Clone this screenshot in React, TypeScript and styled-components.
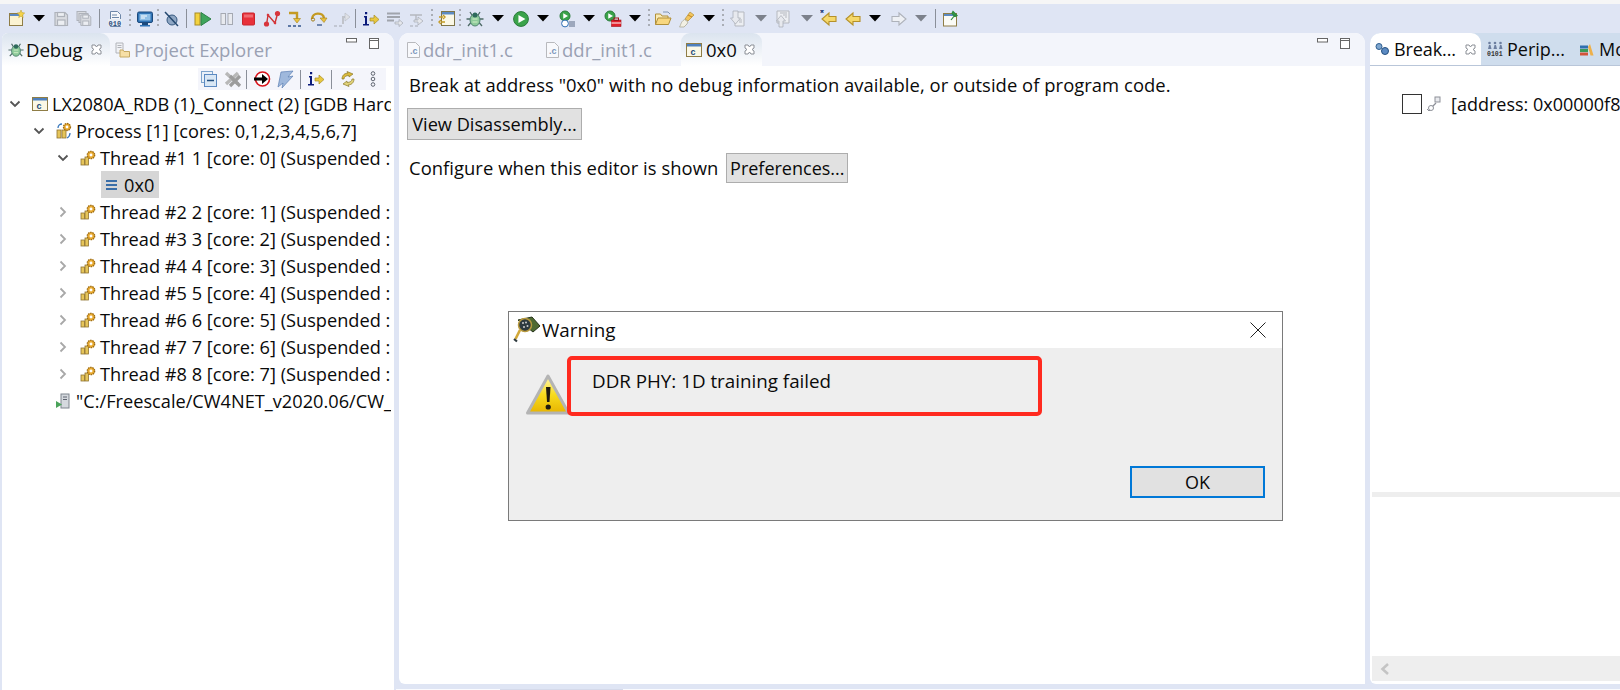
import React from "react";
import styled, { createGlobalStyle } from "styled-components";

const Global = createGlobalStyle`
  html, body { margin: 0; padding: 0; width: 1620px; height: 690px; overflow: hidden; background: #dfe5f4; }
  * { box-sizing: border-box; }
  body { font-family: "Open Sans", "Noto Sans", sans-serif; color: #0a0a0a; }
`;

const Page = styled.div`
  position: relative;
  width: 1620px;
  height: 690px;
  display: flex;
  flex-direction: column;
  background: #dfe5f4;
  overflow: hidden;
`;
const TopStrip = styled.div`
  height: 4px;
  background: #f6f6f6;
  flex: none;
`;
const Toolbar = styled.div`
  height: 29px;
  flex: none;
  display: flex;
  align-items: center;
  background: #dfe5f4;
`;
const Slot = styled.div<{ $ml: number }>`
  width: 12px;
  height: 22px;
  flex: none;
  margin-left: ${(p) => p.$ml}px;
  display: flex;
  align-items: center;
  justify-content: center;
  & > svg { flex: none; }
`;
const Sep = styled.div`
  width: 1px;
  height: 19px;
  flex: none;
  background: #8a8f99;
`;
const Dots = styled.div`
  width: 2px;
  height: 20px;
  flex: none;
  background: repeating-linear-gradient(to bottom, #a9adb5 0 2px, transparent 2px 5px);
`;
const Main = styled.div`
  flex: 1;
  min-height: 0;
  display: flex;
  padding-left: 2px;
`;
const LeftPanel = styled.section`
  width: 392px;
  flex: none;
  background: #fff;
  border-top-right-radius: 10px;
  border-top-left-radius: 6px;
  overflow: hidden;
  display: flex;
  flex-direction: column;
`;
const RightStack = styled.div`
  flex: 1;
  min-width: 0;
  display: flex;
  flex-direction: column;
`;
const Columns = styled.div`
  height: 651px;
  flex: none;
  display: flex;
  padding-left: 5px;
`;
const BottomBar = styled.div`
  height: 5px;
  flex: none;
`;
const MiniTabs = styled.div`
  height: 2px;
  flex: none;
  background: #fafbfe;
  margin-left: 2px;
  padding-left: 104px;
`;
const MiniTab = styled.div`
  width: 123px;
  height: 2px;
  background: #d5daea;
`;
const CenterPanel = styled.section`
  width: 966px;
  flex: none;
  background: #fff;
  border-radius: 10px 10px 0 6px;
  overflow: hidden;
  display: flex;
  flex-direction: column;
`;
const RightPanel = styled.section`
  flex: 1;
  margin-left: 5px;
  min-width: 0;
  background: #fff;
  border-top-left-radius: 10px;
  border-bottom-left-radius: 6px;
  overflow: hidden;
  display: flex;
  flex-direction: column;
`;
const TabBar = styled.div`
  height: 33px;
  flex: none;
  display: flex;
  align-items: stretch;
  background: #f3f5fb;
  position: relative;
`;
const RightTabBar = styled(TabBar)`
  background: #cfdded;
  border-bottom: 1px solid #b9c6d9;
`;
const Tab = styled.div<{ $w: number; $pl: number; $active?: boolean }>`
  width: ${(p) => p.$w}px;
  padding-left: ${(p) => p.$pl}px;
  flex: none;
  display: flex;
  align-items: center;
  font-size: 18.5px;
  white-space: nowrap;
  color: ${(p) => (p.$active ? "#0a0a0a" : "#9aa1b3")};
  & > svg { flex: none; }
  ${(p) =>
    p.$active
      ? "background: linear-gradient(to bottom, #dbe4ef, #ffffff); border-radius: 0 10px 0 0;"
      : ""}
`;
const CenterActive = styled(Tab)`
  border-radius: 9px 9px 0 0;
`;
const RightTabActive = styled(Tab)`
  background: #fff;
  border-radius: 10px 10px 0 0;
  font-size: 18px;
  letter-spacing: -0.1px;
`;
const RightTab = styled(Tab)`
  color: #0a0a0a;
  font-size: 18px;
  overflow: hidden;
`;
const TabLabel = styled.span<{ $gap: number }>`
  margin-left: ${(p) => p.$gap}px;
`;
const CloseMark = styled.span<{ $gap: number }>`
  margin-left: ${(p) => p.$gap}px;
  display: flex;
`;
const Spacer = styled.div`
  flex: 1;
`;
const WinButtons = styled.div`
  display: flex;
  align-items: flex-start;
  gap: 11px;
  padding: 5px 13px 0 0;
`;
const ViewBarRow = styled.div`
  height: 24px;
  flex: none;
  display: flex;
  justify-content: flex-end;
  align-items: flex-end;
  padding-right: 8px;
`;
const ViewBar = styled.div`
  width: 188px;
  height: 22px;
  background: #f4f5fb;
  display: flex;
  align-items: center;
`;
const Tree = styled.div`
  display: flex;
  flex-direction: column;
  overflow: hidden;
  width: 389px;
`;
const Row = styled.div<{ $d: number }>`
  height: 27px;
  flex: none;
  display: flex;
  align-items: center;
  padding-left: ${(p) => 4 + p.$d * 24}px;
  font-size: 18.2px;
  white-space: nowrap;
`;
const Chevron = styled.span`
  width: 18px;
  flex: none;
  display: flex;
  justify-content: center;
`;
const RowIcon = styled.span`
  width: 16px;
  margin-left: 8px;
  margin-right: 4px;
  flex: none;
  display: flex;
`;
const SelectedRow = styled.div`
  height: 27px;
  flex: none;
  display: flex;
  padding-left: 99px;
`;
const Selected = styled.div`
  width: 58px;
  display: flex;
  align-items: center;
  background: #d6d6d6;
  padding-left: 4px;
  gap: 6px;
  font-size: 18.2px;
`;
const EditorBody = styled.div`
  padding: 4px 8px 0 10px;
  display: flex;
  flex-direction: column;
  align-items: flex-start;
`;
const EditorLine = styled.div`
  font-size: 18.4px;
  line-height: 30px;
  white-space: nowrap;
  letter-spacing: 0.05px;
`;
const Btn = styled.button`
  height: 32px;
  padding: 0;
  border: 1px solid #adadad;
  background: #e1e1e1;
  font: inherit;
  font-size: 18.2px;
  color: #0a0a0a;
  display: block;
`;
const ViewDisasm = styled(Btn)`
  width: 175px;
  margin: 8px 0 0 -2px;
`;
const ConfigRow = styled.div`
  margin-top: 13px;
  display: flex;
  align-items: center;
  gap: 8px;
`;
const PrefBtn = styled(Btn)`
  width: 122px;
  height: 30px;
  font-size: 18px;
`;
const BreakRow = styled.div`
  display: flex;
  align-items: center;
  padding: 18px 0 0 32px;
  font-size: 18px;
  white-space: nowrap;
  height: 58px;
`;
const Check = styled.span`
  width: 20px;
  height: 20px;
  flex: none;
  border: 1px solid #333;
  background: #fff;
`;
const BreakIcon = styled.span`
  margin: 0 9px 0 4px;
  display: flex;
`;
const UpperPane = styled.div`
  height: 426px;
  flex: none;
`;
const Divider = styled.div`
  height: 5px;
  flex: none;
  margin-left: 2px;
  background: #eeeeee;
`;
const LowerPane = styled.div`
  flex: 1;
`;
const HScroll = styled.div`
  height: 25px;
  flex: none;
  margin: 0 0 3px 2px;
  background: #eeeeee;
  padding-left: 8px;
  display: flex;
  align-items: center;
`;
const Dialog = styled.div`
  position: absolute;
  left: 508px;
  top: 311px;
  width: 775px;
  height: 210px;
  border: 1px solid #7a7a7a;
  background: #eeeeee;
  display: flex;
  flex-direction: column;
  box-sizing: border-box;
`;
const DialogTitle = styled.div`
  height: 36px;
  flex: none;
  background: #fff;
  display: flex;
  align-items: center;
  padding: 0 16px 0 3px;
  font-size: 18.8px;
  gap: 0;
`;
const DialogBody = styled.div`
  flex: 1;
  display: flex;
  flex-direction: column;
  position: relative;
`;
const Message = styled.div`
  display: flex;
  padding: 0 0 0 16px;
  align-items: flex-start;
  height: 118px;
`;
const WarnIcon = styled.span`
  margin-top: 25px;
  display: flex;
`;
const MsgText = styled.div`
  margin: 21px 0 0 21px;
  font-size: 18.8px;
  line-height: 24px;
`;
const Actions = styled.div`
  display: flex;
  justify-content: flex-end;
  padding-right: 17px;
`;
const OkBtn = styled.button`
  width: 135px;
  height: 32px;
  border: 2px solid #0078d7;
  background: #e1e1e1;
  font: inherit;
  font-size: 18px;
  color: #0a0a0a;
  padding: 0;
`;
const RedBox = styled.div`
  position: absolute;
  left: 58px;
  top: 8px;
  width: 475px;
  height: 60px;
  border: 4px solid #ff2a1f;
  border-radius: 5px;
`;

const S = ({ s = 18, children }: { s?: number; children: React.ReactNode }) => (
  <svg width={s} height={s} viewBox="0 0 18 18">{children}</svg>
);
const Drop = ({ c = "#000" }: { c?: string }) => (
  <svg width="12" height="7" viewBox="0 0 12 7"><polygon points="0,0 12,0 6,6.5" fill={c} /></svg>
);
const Gd = () => <Drop c="#7c818b" />;
const NewIco = () => (
  <S><rect x="1.5" y="3.5" width="13" height="12" fill="#fbf3d2" stroke="#8f7d46" /><rect x="2" y="4" width="12" height="2" fill="#5c8ac2" /><path d="M13 0l1 2.6 2.7.4-2 1.9.5 2.7-2.2-1.4-2.3 1.4.6-2.7-2-1.9 2.7-.4z" fill="#f5d34a" stroke="#b99b2a" strokeWidth=".5" /></S>
);
const Floppy = ({ x = 2 }: { x?: number }) => (
  <g fill="none" stroke="#aeb2ba" strokeWidth="1.2"><path d={`M${x} 2.5h10l2.5 2.5v10.5h-12.5z`} fill="#d9dbe0" /><rect x={x + 2.5} y="2.5" width="7" height="4" fill="#eceef2" /><rect x={x + 2.5} y="10" width="7.5" height="5.5" fill="#eceef2" /></g>
);
const SaveIco = () => <S><Floppy /></S>;
const SaveAllIco = () => (
  <S><rect x="1" y="1.5" width="9" height="9" fill="#d9dbe0" stroke="#aeb2ba" /><rect x="3" y="3.5" width="9" height="9" fill="#d9dbe0" stroke="#aeb2ba" /><g transform="translate(4 3) scale(.8)"><Floppy x={1} /></g></S>
);
const BinIco = () => (
  <S><path d="M3.5 1.5h7l3 3v12h-10z" fill="#f6f8fb" stroke="#6d87a8" /><path d="M5 5h5M5 7.5h7" stroke="#6d87a8" /><rect x="1" y="9" width="14" height="7" fill="#e7edf5" /><text x="1.5" y="15.5" fontFamily="Liberation Mono, monospace" fontSize="7" fontWeight="700" fill="#2d4f7d">010</text></S>
);
const MonitorIco = () => (
  <S><rect x="1.5" y="2" width="15" height="10.5" rx="1.5" fill="#2f73b5" stroke="#1c4a7c" /><rect x="3.5" y="4" width="11" height="6.5" fill="#8fbfe6" /><path d="M5 6h6M5 8h4" stroke="#fff" /><rect x="6" y="13" width="6" height="2" fill="#1c4a7c" /><rect x="4" y="15" width="10" height="1.5" fill="#2f73b5" /></S>
);
const NoBpIco = () => (
  <S><circle cx="9" cy="10" r="5" fill="#8fa7c4" stroke="#35587f" /><path d="M2 2l13 14" stroke="#24486f" strokeWidth="1.5" /></S>
);
const ResumeIco = () => (
  <S><rect x="1" y="3" width="5" height="12" fill="#f3d23f" stroke="#a88c24" /><polygon points="7,2.5 17,9 7,15.5" fill="#3fa55b" stroke="#2f8147" /></S>
);
const SuspendIco = () => (
  <S><rect x="3" y="3.5" width="4.5" height="11" fill="#e8eaef" stroke="#a5a9b2" /><rect x="10" y="3.5" width="4.5" height="11" fill="#e8eaef" stroke="#a5a9b2" /></S>
);
const StopIco = () => (
  <S><rect x="2.5" y="3" width="12" height="12" rx="1" fill="#e8303a" stroke="#c9252c" /><rect x="4" y="4.5" width="9" height="3" fill="#f06a70" /></S>
);
const DiscoIco = () => (
  <S><path d="M3.5 15L5 5l7 8 3-11" fill="none" stroke="#c33" strokeWidth="1.4" /><circle cx="3.5" cy="14" r="2.6" fill="#d8343b" /><circle cx="14.5" cy="3.5" r="2.6" fill="#d8343b" /><circle cx="5" cy="5" r="1.3" fill="#d8343b" /><circle cx="12" cy="13" r="1.3" fill="#d8343b" /></S>
);
const StepIntoIco = () => (
  <S><path d="M2 3h8v6" fill="none" stroke="#c49a22" strokeWidth="2.4" /><polygon points="6.5,8.5 13.5,8.5 10,13" fill="#e9c23d" stroke="#a57f18" strokeWidth=".6" /><path d="M1 16h3M6 16h3M11 16h3" stroke="#33548a" strokeWidth="1.3" /></S>
);
const StepOverIco = () => (
  <S><path d="M2 9c0-7 11-7 12-1" fill="none" stroke="#c49a22" strokeWidth="2.4" /><polygon points="10,8 17,8 14,12.5" fill="#e9c23d" stroke="#a57f18" strokeWidth=".6" /><circle cx="3" cy="9.5" r="1.6" fill="none" stroke="#a57f18" /><path d="M7 15h5" stroke="#33548a" strokeWidth="1.3" /></S>
);
const StepRetIco = () => (
  <S><path d="M10 14V7h5" fill="none" stroke="#c0c3ca" strokeWidth="2" /><polygon points="9,7 14,3 14,11" fill="#dfe1e6" stroke="#b5b8bf" strokeWidth=".6" transform="rotate(180 13 7)" /><path d="M1 16h3M6 16h3" stroke="#a5a9b2" strokeWidth="1.2" /></S>
);
const IArrowIco = () => (
  <S><path d="M2 6h3v8h2v1.5H1V14h2V7.5H2zM3 2h2.2v2.2H3z" fill="#0a1a7a" /><path d="M8 8h4V5l5 4.5-5 4.5v-3H8z" fill="#e8c840" stroke="#a88c24" strokeWidth=".7" /></S>
);
const ListArrowIco = () => (
  <S><path d="M1 3.5h13M1 7h13M1 10.5h7" stroke="#a0a4ac" strokeWidth="1.8" /><path d="M9 12h4v-2.5l4 3.5-4 3.5V14H9z" fill="#e5e7ec" stroke="#a5a9b2" strokeWidth=".7" /></S>
);
const StepGreyIco = () => (
  <S><path d="M1 5h12M7 5v5" stroke="#b5b8bf" strokeWidth="1.4" /><path d="M5 10h4v-3l5 4-5 4v-3H5z" fill="#e5e7ec" stroke="#a5a9b2" strokeWidth=".7" /><path d="M1 16h3M6 16h3" stroke="#a5a9b2" /></S>
);
const WinArrowIco = () => (
  <S><rect x="3.5" y="1.5" width="13" height="14" fill="#fbf8e6" stroke="#7f7547" /><rect x="4" y="2" width="12" height="2.5" fill="#5c8ac2" /><path d="M1 7h4M5 5l2 2-2 2M7 12H3M3 10l-2 2 2 2" fill="none" stroke="#c49a22" strokeWidth="1.4" /></S>
);
const BugIco = ({ s = 18 }: { s?: number }) => (
  <S s={s}><path d="M4 2l2.500 4M14 2l-2.500 4M.5 9h4M13.500 9h4M2 16l3-3.500M16 16l-3-3.500" stroke="#4d6a66" strokeWidth="1.300" /><ellipse cx="9" cy="10" rx="5" ry="6" fill="#8ecb9a" stroke="#4f8270" /><circle cx="9" cy="5" r="2.500" fill="#2f6a5c" /><path d="M6.500 9h5M6.500 12h5" stroke="#d3efc8" /></S>
);
const RunBall = ({ r = 7, cx = 9, cy = 9 }: { r?: number; cx?: number; cy?: number }) => (
  <>
    <circle cx={cx} cy={cy} r={r} fill="#3aa34a" stroke="#2a7b3a" />
    <polygon points={`${cx - r * 0.35},${cy - r * 0.55} ${cx + r * 0.6},${cy} ${cx - r * 0.35},${cy + r * 0.55}`} fill="#fff" />
  </>
);
const RunIco = () => <S><RunBall r={7.4} /></S>;
const CovIco = () => (
  <S><RunBall r={5} cx={7} cy={6} /><circle cx="7" cy="13.5" r="3.4" fill="#fff" stroke="#2e6fb4" /><path d="M11 12h6M11 14h6M11 16h6" stroke="#5a6b85" /></S>
);
const ToolIco = () => (
  <S><RunBall r={5} cx={6} cy={6} /><rect x="7.5" y="10" width="9.5" height="6.5" fill="#e0202a" stroke="#a01218" strokeWidth=".6" /><rect x="10" y="8" width="4.5" height="2.5" fill="none" stroke="#a01218" /><path d="M7.5 13h9.5" stroke="#fff" /></S>
);
const FolderIco = () => (
  <S><path d="M1.5 14.5V4h5l1.5 2h6v2" fill="#f9eab4" stroke="#b08f3a" /><path d="M1.5 14.5L4 8h13l-2.5 6.5z" fill="#f8d77f" stroke="#b08f3a" /><path d="M9 2h5l2 2" fill="none" stroke="#7f95b5" /></S>
);
const BrushIco = () => (
  <S><path d="M7 9l5-7 4 3-6 6z" fill="#f3c55e" stroke="#b08f3a" strokeWidth=".7" /><path d="M6.5 9.5L10 12l-1 2-3 3H1.5c1.5-2 1-5 5-7.5z" fill="#f2f0e4" stroke="#a5a08a" strokeWidth=".7" /><path d="M10 5l4 2" stroke="#c3851f" /></S>
);
const DocDownIco = () => (
  <S><path d="M6 2h9v14H6z" fill="#eceef2" stroke="#b5b8bf" /><path d="M4 1h5v7h2.5L6.5 14 1.5 8H4z" fill="#e7e9ee" stroke="#a5a9b2" strokeWidth=".7" /><path d="M10 10h3M10 12h3" stroke="#b5b8bf" /></S>
);
const DocUpIco = () => (
  <S><path d="M3 1h12v12H3z" fill="#eceef2" stroke="#b5b8bf" /><path d="M6 3h7M9 5h4M11 7h2" stroke="#b5b8bf" /><path d="M5 17v-6H2.5L7 5.5l4.5 5.5H9v6z" fill="#e7e9ee" stroke="#a5a9b2" strokeWidth=".7" /></S>
);
const LeftArrow = ({ c = "#f5d86a", b = "#b5912a" }: { c?: string; b?: string }) => (
  <path d="M9 3L2 9l7 6v-3.5h7v-5H9z" fill={c} stroke={b} strokeWidth="1.1" />
);
const BackEditIco = () => (
  <S><LeftArrow /><text x="0" y="7" fontFamily="Liberation Sans, sans-serif" fontSize="10" fontWeight="700" fill="#1c3b78">*</text></S>
);
const BackIco = () => <S><LeftArrow /></S>;
const ForwardIco = () => (
  <S><g transform="matrix(-1 0 0 1 18 0)"><LeftArrow c="#eef0f4" b="#aeb2ba" /></g></S>
);
const PinIco = () => (
  <S><rect x="1.5" y="3.5" width="13" height="12.5" fill="#fbfbf6" stroke="#8f7d46" /><rect x="2" y="4" width="12" height="2" fill="#5c8ac2" /><path d="M9 10l4-5M11 1.5l4 4-2 1-3-3z" stroke="#2e8a3e" fill="#35a04a" strokeWidth="1.2" /></S>
);
const CollapseIco = () => (
  <S><rect x="1.5" y="1.5" width="11" height="11" fill="#eaf1f9" stroke="#7ea4cc" /><rect x="4.5" y="4.5" width="12" height="12" fill="#d9e7f5" stroke="#5c8ac2" /><path d="M7 10.5h7" stroke="#24507f" strokeWidth="1.4" /></S>
);
const RemoveAllIco = () => (
  <S><path d="M2 3l12 11M14 3L2 14" stroke="#b8b8b8" strokeWidth="3.4" /><path d="M6 6l10 10M16 6L6 16" stroke="#9c9c9c" strokeWidth="3.2" /></S>
);
const SkipIco = () => (
  <S><circle cx="9.5" cy="9" r="7" fill="#fff" stroke="#d8131c" strokeWidth="1.6" /><path d="M1 9h10" stroke="#000" strokeWidth="3" /><polygon points="9,4 15,9 9,14" fill="#000" /></S>
);
const BoltIco = () => (
  <S><path d="M16 1L4 2 1 17l5-4-1 5L16 6l-5 1z" fill="#9fb8dc" stroke="#5c80b5" strokeWidth=".7" /></S>
);
const DropFrameIco = () => (
  <S><path d="M3 9c0-4 3-6 6-6l-1-1.5L14 4l-4 3V5.5C7 5.500 5 7 5 9z" fill="#d9b93c" stroke="#8b7a2a" strokeWidth=".7" /><path d="M15 9c0 4-3 6-6 6l1 1.500L4 14l4-3v1.500c3 0 5-1.500 5-3.500z" fill="#e0d27a" stroke="#8b7a2a" strokeWidth=".7" /></S>
);
const MenuIco = () => (
  <S><g fill="none" stroke="#5f6570" strokeWidth="1"><circle cx="9" cy="3.500" r="1.800" /><circle cx="9" cy="9" r="1.800" /><circle cx="9" cy="14.500" r="1.800" /></g></S>
);
const CloseX = () => (
  <svg width="11" height="11" viewBox="0 0 11 11"><path d="M1 1l3 0 1.500 2L7 1h3v3L8 5.500 10 7v3H7L5.500 8 4 10H1V7l2-1.500L1 4z" fill="#fff" stroke="#8b8f96" /></svg>
);
const MinIco = () => <svg width="12" height="6" viewBox="0 0 12 6"><rect x=".5" y=".5" width="10" height="3.500" fill="#fff" stroke="#666" /></svg>;
const MaxIco = () => <svg width="12" height="12" viewBox="0 0 12 12"><rect x=".5" y=".5" width="9" height="10" fill="#fff" stroke="#666" /><path d="M1 2.500h8" stroke="#666" /></svg>;
const CFileIco = () => (
  <svg width="16" height="18" viewBox="0 0 16 18"><path d="M1.500 1.500h8l4 4v11h-12z" fill="#f8f9fc" stroke="#b8b9bd" /><text x="4" y="13" fontFamily="Liberation Sans, sans-serif" fontSize="9" fontWeight="700" fill="#7a95bb">.c</text></svg>
);
const CWinIco = () => (
  <svg width="16" height="16" viewBox="0 0 16 16"><rect x=".5" y="1.500" width="15" height="13" fill="#fbf8e6" stroke="#8f7d46" /><rect x="1" y="2" width="14" height="2.500" fill="#4f80bd" /><text x="4.500" y="12.500" fontFamily="Liberation Sans, sans-serif" fontSize="9" fontWeight="700" fill="#23497a">c</text></svg>
);
const ProjIco = () => (
  <svg width="15" height="16" viewBox="0 0 15 16"><path d="M1 1h7v10H1z" fill="#f1f2f6" stroke="#b2b4ba" /><path d="M5 8h3l1 1.500h5.500v5.500H5z" fill="#f6dfa6" stroke="#c6a962" /><path d="M2.500 3.500h4M2.500 5.500h4" stroke="#b2b4ba" /></svg>
);
const ChevD = () => <svg width="12" height="8" viewBox="0 0 12 8"><path d="M1.500 1.500L6 6l4.500-4.500" fill="none" stroke="#555" strokeWidth="1.800" /></svg>;
const ChevR = () => <svg width="8" height="12" viewBox="0 0 8 12"><path d="M1.500 1.500L6 6l-4.500 4.500" fill="none" stroke="#a8a8a8" strokeWidth="1.800" /></svg>;
const Gear = ({ cx, cy, r }: { cx: number; cy: number; r: number }) => (
  <>
    <circle cx={cx} cy={cy} r={r} fill="#e8a92e" stroke="#9d6c14" strokeDasharray="1.500 .8" strokeWidth="1.300" />
    <circle cx={cx} cy={cy} r={r * 0.4} fill="#fff" />
  </>
);
const ThreadIco = () => (
  <svg width="16" height="16" viewBox="0 0 16 16"><rect x="1" y="9" width="3.500" height="6" fill="#e6c55a" stroke="#8f7330" strokeWidth=".8" /><rect x="5" y="7" width="3.500" height="8" fill="#e6c55a" stroke="#8f7330" strokeWidth=".8" /><Gear cx={11} cy={5} r={3.700} /></svg>
);
const ProcIco = () => (
  <svg width="16" height="18" viewBox="0 0 16 18"><rect x="1" y="8" width="4" height="8" fill="#e6c55a" stroke="#8f7330" strokeWidth=".8" /><rect x="6" y="8" width="4" height="8" fill="#e6c55a" stroke="#8f7330" strokeWidth=".8" /><Gear cx={11} cy={5} r={3.500} /><path d="M2 6c0-3 2-4 4-4M14 11c0 3-1 4-3 5" fill="none" stroke="#3a79bd" strokeWidth="1.300" /></svg>
);
const StackIco = () => (
  <svg width="13" height="12" viewBox="0 0 13 12"><path d="M1 2h11M1 6h11M1 10h11" stroke="#3a6ea8" strokeWidth="2" /></svg>
);
const TermIco = () => (
  <svg width="14" height="16" viewBox="0 0 14 16"><rect x="5" y="1" width="8" height="14" fill="#d5d9de" stroke="#7f858e" /><path d="M7 4h4M7 6.500h4" stroke="#5f6570" /><polygon points="0,8 6,11.500 0,15" fill="#4aa35a" /></svg>
);
const BpIco = () => (
  <svg width="14" height="14" viewBox="0 0 14 14"><circle cx="4" cy="4.500" r="3" fill="#7ea6cf" stroke="#2e5e91" /><circle cx="10" cy="9" r="3.500" fill="#5c8ac2" stroke="#24507f" /></svg>
);
const PeripIco = () => (
  <svg width="16" height="16" viewBox="0 0 16 16"><g fill="#6d7fa0"><circle cx="2.500" cy="2" r="1.300" /><circle cx="8" cy="2" r="1.300" /><circle cx="13.500" cy="2" r="1.300" /><path d="M1 8l1-4h1.500l1 4zM6.500 8l1-4H9l1 4zM12 8l1-4h1.500l1 4z" /></g><text x="0" y="15" fontFamily="Liberation Mono, monospace" fontSize="6.500" fontWeight="700" fill="#333">0101</text></svg>
);
const ModIco = () => (
  <svg width="15" height="15" viewBox="0 0 15 15"><rect x="1" y="10.500" width="8" height="3" fill="#d2553a" /><rect x="1" y="7" width="8" height="3" fill="#3a9a5a" /><rect x="1" y="3.500" width="8" height="3" fill="#2f6fb0" /><path d="M11 2l3.500 11.500h-3L9 5z" fill="#eeb04a" /></svg>
);
const BpAddrIco = () => (
  <svg width="16" height="18" viewBox="0 0 16 18"><rect x="9" y="2" width="5" height="5" fill="#e9eaee" stroke="#8d9098" /><path d="M10 8l-4 4" stroke="#8d9098" strokeWidth="1.300" /><circle cx="5" cy="13" r="2.500" fill="#fff" stroke="#8d9098" /><path d="M1 14l2 2 1-1" fill="none" stroke="#8d9098" /></svg>
);
const Pirate = () => (
  <svg width="30" height="30" viewBox="0 0 30 30"><path d="M6 5L20 2l8 9-7 6z" fill="#4f6a32" stroke="#26331a" /><circle cx="13" cy="10" r="6.500" fill="#2e3a3e" stroke="#b89a3f" strokeWidth="1.500" /><circle cx="11" cy="8" r="1" fill="#ccc" /><circle cx="14" cy="7.500" r="1" fill="#ccc" /><circle cx="12" cy="12" r="1" fill="#ccc" /><circle cx="15.500" cy="11" r="1" fill="#ccc" /><path d="M8 15l-4.500 9" stroke="#d3a93a" strokeWidth="2.600" /><path d="M2 24l3 2.500" stroke="#2e3a3e" strokeWidth="2.200" /></svg>
);
const Warn = () => (
  <svg width="46" height="44" viewBox="0 0 46 44">
    <defs>
      <linearGradient id="wy" x1="0" y1="0" x2="0" y2="1"><stop offset="0" stopColor="#fff6b0" /><stop offset=".5" stopColor="#f7dc1e" /><stop offset="1" stopColor="#e8b400" /></linearGradient>
    </defs>
    <path d="M23 3L43.500 40H2.500z" fill="url(#wy)" stroke="#b4b4b4" strokeWidth="3" strokeLinejoin="round" />
    <path d="M21 14h4.500l-1 15h-2.500z" fill="#1e1a10" />
    <circle cx="23.200" cy="34" r="2.600" fill="#1e1a10" />
  </svg>
);
const XIco = () => <svg width="16" height="16" viewBox="0 0 16 16"><path d="M.5.500l15 15M15.500.500l-15 15" stroke="#222" strokeWidth="1" /></svg>;
const ChevLeft = () => <svg width="10" height="12" viewBox="0 0 10 12"><path d="M8 1L2.500 6 8 11" fill="none" stroke="#c4c4c4" strokeWidth="2.600" /></svg>;

const toolbarItems: [number, React.ReactNode][] = [
  [17, <NewIco />], [39, <Drop />], [62, <SaveIco />], [85, <SaveAllIco />], [99, <Sep />],
  [116, <BinIco />], [130, <Dots />], [145, <MonitorIco />], [158, <Dots />], [172, <NoBpIco />],
  [186, <Sep />], [203, <ResumeIco />], [227, <SuspendIco />], [249, <StopIco />], [272, <DiscoIco />],
  [296, <StepIntoIco />], [319, <StepOverIco />], [342, <StepRetIco />], [355, <Sep />], [371, <IArrowIco />],
  [395, <ListArrowIco />], [418, <StepGreyIco />], [432, <Dots />], [447, <WinArrowIco />], [460, <Dots />],
  [475, <BugIco />], [498, <Drop />], [521, <RunIco />], [543, <Drop />], [567, <CovIco />],
  [589, <Drop />], [613, <ToolIco />], [635, <Drop />], [649, <Dots />], [663, <FolderIco />],
  [687, <BrushIco />], [709, <Drop />], [723, <Dots />], [738, <DocDownIco />], [761, <Gd />],
  [783, <DocUpIco />], [807, <Gd />], [829, <BackEditIco />], [853, <BackIco />], [875, <Drop />],
  [899, <ForwardIco />], [921, <Gd />], [935, <Sep />], [951, <PinIco />],
];
const viewItems: [number, React.ReactNode][] = [
  [209, <CollapseIco />], [233, <RemoveAllIco />], [246, <Sep />], [262, <SkipIco />], [286, <BoltIco />],
  [300, <Sep />], [316, <IArrowIco />], [331, <Sep />], [348, <DropFrameIco />], [373, <MenuIco />],
];
const threads = [2, 3, 4, 5, 6, 7, 8];

const renderSlots = (items: [number, React.ReactNode][], origin: number) =>
  items.map(([c, node], i) => {
    const prev = i === 0 ? origin - 6 : items[i - 1][0];
    return (
      <Slot key={c} $ml={c - prev - 12}>
        {node}
      </Slot>
    );
  });

export default function App() {
  return (
    <Page>
      <Global />
      <TopStrip />
      <Toolbar>{renderSlots(toolbarItems, 0)}</Toolbar>
      <Main>
        <LeftPanel>
          <TabBar>
            <Tab $w={108} $pl={6} $active>
              <BugIco s={16} />
              <TabLabel $gap={2}>Debug</TabLabel>
              <CloseMark $gap={8}><CloseX /></CloseMark>
            </Tab>
            <Tab $w={180} $pl={5}>
              <ProjIco />
              <TabLabel $gap={4}>Project Explorer</TabLabel>
            </Tab>
            <Spacer />
            <WinButtons><MinIco /><MaxIco /></WinButtons>
          </TabBar>
          <ViewBarRow>
            <ViewBar>{renderSlots(viewItems, 198)}</ViewBar>
          </ViewBarRow>
          <Tree>
            <Row $d={0}><Chevron><ChevD /></Chevron><RowIcon><CWinIco /></RowIcon>LX2080A_RDB (1)_Connect (2) [GDB Hardware Debugging]</Row>
            <Row $d={1}><Chevron><ChevD /></Chevron><RowIcon><ProcIco /></RowIcon>Process [1] [cores: 0,1,2,3,4,5,6,7]</Row>
            <Row $d={2}><Chevron><ChevD /></Chevron><RowIcon><ThreadIco /></RowIcon>Thread #1 1 [core: 0] (Suspended : Breakpoint)</Row>
            <SelectedRow><Selected><StackIco />0x0</Selected></SelectedRow>
            {threads.map((n) => (
              <Row $d={2} key={n}>
                <Chevron><ChevR /></Chevron>
                <RowIcon><ThreadIco /></RowIcon>
                Thread #{n} {n} [core: {n - 1}] (Suspended : Breakpoint)
              </Row>
            ))}
            <Row $d={1}><Chevron /><RowIcon><TermIco /></RowIcon>"C:/Freescale/CW4NET_v2020.06/CW_ARMv8/gdb"</Row>
          </Tree>
        </LeftPanel>
        <RightStack>
          <Columns>
            <CenterPanel>
              <TabBar>
                <Tab $w={140} $pl={7}><CFileIco /><TabLabel $gap={1}>ddr_init1.c</TabLabel></Tab>
                <Tab $w={142} $pl={6}><CFileIco /><TabLabel $gap={1}>ddr_init1.c</TabLabel></Tab>
                <CenterActive $w={81} $pl={5} $active><CWinIco /><TabLabel $gap={4}>0x0</TabLabel><CloseMark $gap={7}><CloseX /></CloseMark></CenterActive>
                <Spacer />
                <WinButtons><MinIco /><MaxIco /></WinButtons>
              </TabBar>
              <EditorBody>
                <EditorLine>Break at address "0x0" with no debug information available, or outside of program code.</EditorLine>
                <ViewDisasm>View Disassembly...</ViewDisasm>
                <ConfigRow>
                  <EditorLine>Configure when this editor is shown</EditorLine>
                  <PrefBtn>Preferences...</PrefBtn>
                </ConfigRow>
              </EditorBody>
            </CenterPanel>
            <RightPanel>
              <RightTabBar>
                <RightTabActive $w={111} $pl={5} $active><BpIco /><TabLabel $gap={5}>Break...</TabLabel><CloseMark $gap={9}><CloseX /></CloseMark></RightTabActive>
                <RightTab $w={98} $pl={6}><PeripIco /><TabLabel $gap={4}>Perip...</TabLabel></RightTab>
                <RightTab $w={60} $pl={0}><ModIco /><TabLabel $gap={5}>Modules</TabLabel></RightTab>
              </RightTabBar>
              <UpperPane>
                <BreakRow><Check /><BreakIcon><BpAddrIco /></BreakIcon>[address: 0x00000f8000000000]</BreakRow>
              </UpperPane>
              <Divider />
              <LowerPane />
              <HScroll><ChevLeft /></HScroll>
            </RightPanel>
          </Columns>
          <BottomBar />
          <MiniTabs><MiniTab /></MiniTabs>
        </RightStack>
      </Main>
      <Dialog>
        <DialogTitle><Pirate />Warning<Spacer /><XIco /></DialogTitle>
        <DialogBody>
          <Message>
            <WarnIcon><Warn /></WarnIcon>
            <MsgText>DDR PHY: 1D training failed</MsgText>
          </Message>
          <Actions><OkBtn>OK</OkBtn></Actions>
          <RedBox />
        </DialogBody>
      </Dialog>
    </Page>
  );
}
